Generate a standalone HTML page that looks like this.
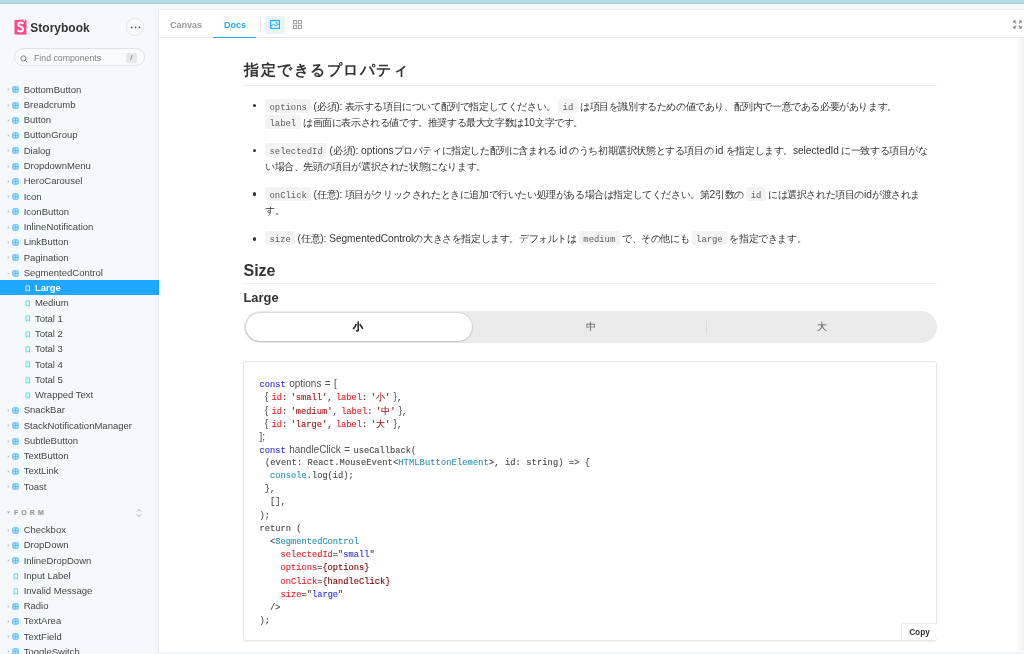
<!DOCTYPE html>
<html><head><meta charset="utf-8">
<style>
*{box-sizing:border-box;margin:0;padding:0}
html,body{width:1024px;height:654px;overflow:hidden;background:#f6f9fc;font-family:"Liberation Sans",sans-serif;color:#333}
.abs{position:absolute}
#topband{position:absolute;left:0;top:0;width:1024px;height:3.5px;background:#b3dde4}
#sidebar{position:absolute;left:0;top:7px;width:1024px;height:647px;background:#f6f9fc}
.ic{position:absolute}
.it{position:absolute;height:15.27px;line-height:15.27px;font-size:9.5px;color:#444;white-space:nowrap}
.b{font-weight:bold}
.sel{position:absolute;left:0;width:159px;height:15.27px;background:#1ea7fd}
#panel{position:absolute;left:159px;top:10.3px;width:865px;height:641.3px;background:#fff;box-shadow:0 0 2px rgba(0,0,0,.10);}
#toolbar{position:absolute;left:0;top:0;width:865px;height:27.7px;border-bottom:1px solid #ebebeb}
.tab{position:absolute;top:0;height:27px;line-height:30px;font-size:9px;font-weight:bold;color:#999}
.docs{position:absolute;font-size:9.66px;letter-spacing:-0.4px;color:#333;white-space:nowrap}
.lat{font-size:10.1px;letter-spacing:0}
h2{position:absolute;font-weight:bold;color:#333;white-space:nowrap}
code{font-family:"Liberation Mono",monospace;font-size:8.9px;letter-spacing:0;background:#f3f3f3;border-radius:3px;padding:4px 4.5px 0;color:#5c5c5c}
.li{position:absolute;left:0;height:16.6px;line-height:16.6px;white-space:nowrap}
.bul{position:absolute;left:252.8px;width:3.4px;height:3.4px;border-radius:50%;background:#333}
.pre{position:absolute;font-family:"Liberation Mono",monospace;font-size:8.73px;color:#4a4a4a;white-space:pre;-webkit-text-stroke:0.12px currentColor}
.cl{position:absolute;left:0;height:13.2px;line-height:13.2px}
.k{color:#0000ff}.p{color:#ff0000}.s{color:#A31515}.cn{color:#2B91AF}.sn{font-family:"Liberation Sans",sans-serif;font-size:10px;word-spacing:0.6px;-webkit-text-stroke:0;color:#505050}
.pre .p{color:#e8202a}.pre .k{color:#2f2ff0}
body{filter:blur(0.4px)}
</style></head><body>
<div id="topband"></div>
<div class="abs" style="left:0;top:2.7px;width:1024px;height:0.9px;background:#a9d0d9"></div>
<div class="abs" style="left:0;top:3.6px;width:1024px;height:3.4px;background:#f8f9fa"></div>
<div id="sidebar"></div>
<div class="abs" style="left:154.6px;top:8px;width:0.8px;height:646px;background:#edf0f3"></div>
<div class="abs" style="left:157.9px;top:8px;width:1px;height:646px;background:#eceef0"></div>
<!-- logo -->
<svg class="abs" style="left:13.5px;top:19px" width="13" height="16" viewBox="0 0 13 16"><path d="M0.5 1.1 L11.6 0.4 Q12.4 0.4 12.4 1.2 V15 Q12.4 15.9 11.6 15.8 L1.2 15.4 Q0.5 15.4 0.5 14.6Z" fill="#ff4785"/><path d="M9.6 0.5 L9.5 2.6 L10.3 2 L11 2.6 L11 0.45Z" fill="#fff"/><path d="M8.9 5.2 Q8.7 3.6 6.5 3.6 Q4.3 3.6 4.3 5.4 Q4.3 6.9 6.5 7.5 Q9 8.2 9 10.3 Q9 12.5 6.4 12.5 Q4.1 12.5 3.9 10.7" fill="none" stroke="#fff" stroke-width="2"/></svg>
<div class="abs b" style="left:30.3px;top:20.1px;font-size:12px;line-height:16px;color:#333">Storybook</div>
<!-- more button -->
<div class="abs" style="left:126px;top:18.3px;width:18px;height:18px;border-radius:50%;border:1px solid #e3e5e8;background:#f8fafc"></div>
<svg class="abs" style="left:126px;top:18px" width="18" height="18" viewBox="0 0 18 18"><circle cx="5.7" cy="9.4" r="0.9" fill="#555"/><circle cx="9.6" cy="9.4" r="0.9" fill="#555"/><circle cx="13.4" cy="9.4" r="0.9" fill="#555"/></svg>
<!-- search -->
<div class="abs" style="left:14px;top:48.3px;width:130.5px;height:18px;border-radius:9px;border:1px solid #dfe2e6;background:#f8fafc"></div>
<svg class="abs" style="left:20px;top:54.5px" width="8" height="8" viewBox="0 0 8 8"><circle cx="3.4" cy="3.4" r="2.6" fill="none" stroke="#777" stroke-width="0.9"/><path d="M5.3 5.3L7.3 7.3" stroke="#777" stroke-width="1"/></svg>
<div class="abs" style="left:34px;top:50.3px;line-height:17px;font-size:8.75px;color:#808080">Find components</div>
<div class="abs" style="left:126px;top:52.7px;width:10.5px;height:10.5px;background:#e4e6e9;border-radius:1.5px;color:#777;font-size:8px;line-height:10.5px;text-align:center">/</div>
<svg class="ic" style="left:5.5px;top:87.3px" width="5" height="5" viewBox="0 0 5 5"><path d="M1.8 1.1V3.9L3.2 2.5Z" fill="#b5b5b5"/></svg>
<svg class="ic" style="left:12.4px;top:86.3px" width="7" height="7" viewBox="0 0 7 7"><rect x="0.7" y="0.7" width="5.6" height="5.6" rx="1" fill="#1ea7fd" fill-opacity="0.35" stroke="#1ea7fd" stroke-width="0.8" stroke-opacity="0.75"/><path d="M3.5 0.9V6.1M0.9 3.5H6.1" stroke="#1ea7fd" stroke-width="0.6" opacity="0.7"/></svg>
<div class="it" style="left:23.7px;top:81.66px">BottomButton</div>
<svg class="ic" style="left:5.5px;top:102.57px" width="5" height="5" viewBox="0 0 5 5"><path d="M1.8 1.1V3.9L3.2 2.5Z" fill="#b5b5b5"/></svg>
<svg class="ic" style="left:12.4px;top:101.57px" width="7" height="7" viewBox="0 0 7 7"><rect x="0.7" y="0.7" width="5.6" height="5.6" rx="1" fill="#1ea7fd" fill-opacity="0.35" stroke="#1ea7fd" stroke-width="0.8" stroke-opacity="0.75"/><path d="M3.5 0.9V6.1M0.9 3.5H6.1" stroke="#1ea7fd" stroke-width="0.6" opacity="0.7"/></svg>
<div class="it" style="left:23.7px;top:96.93px">Breadcrumb</div>
<svg class="ic" style="left:5.5px;top:117.84px" width="5" height="5" viewBox="0 0 5 5"><path d="M1.8 1.1V3.9L3.2 2.5Z" fill="#b5b5b5"/></svg>
<svg class="ic" style="left:12.4px;top:116.84px" width="7" height="7" viewBox="0 0 7 7"><rect x="0.7" y="0.7" width="5.6" height="5.6" rx="1" fill="#1ea7fd" fill-opacity="0.35" stroke="#1ea7fd" stroke-width="0.8" stroke-opacity="0.75"/><path d="M3.5 0.9V6.1M0.9 3.5H6.1" stroke="#1ea7fd" stroke-width="0.6" opacity="0.7"/></svg>
<div class="it" style="left:23.7px;top:112.20px">Button</div>
<svg class="ic" style="left:5.5px;top:133.11px" width="5" height="5" viewBox="0 0 5 5"><path d="M1.8 1.1V3.9L3.2 2.5Z" fill="#b5b5b5"/></svg>
<svg class="ic" style="left:12.4px;top:132.11px" width="7" height="7" viewBox="0 0 7 7"><rect x="0.7" y="0.7" width="5.6" height="5.6" rx="1" fill="#1ea7fd" fill-opacity="0.35" stroke="#1ea7fd" stroke-width="0.8" stroke-opacity="0.75"/><path d="M3.5 0.9V6.1M0.9 3.5H6.1" stroke="#1ea7fd" stroke-width="0.6" opacity="0.7"/></svg>
<div class="it" style="left:23.7px;top:127.48px">ButtonGroup</div>
<svg class="ic" style="left:5.5px;top:148.38px" width="5" height="5" viewBox="0 0 5 5"><path d="M1.8 1.1V3.9L3.2 2.5Z" fill="#b5b5b5"/></svg>
<svg class="ic" style="left:12.4px;top:147.38px" width="7" height="7" viewBox="0 0 7 7"><rect x="0.7" y="0.7" width="5.6" height="5.6" rx="1" fill="#1ea7fd" fill-opacity="0.35" stroke="#1ea7fd" stroke-width="0.8" stroke-opacity="0.75"/><path d="M3.5 0.9V6.1M0.9 3.5H6.1" stroke="#1ea7fd" stroke-width="0.6" opacity="0.7"/></svg>
<div class="it" style="left:23.7px;top:142.75px">Dialog</div>
<svg class="ic" style="left:5.5px;top:163.64999999999998px" width="5" height="5" viewBox="0 0 5 5"><path d="M1.8 1.1V3.9L3.2 2.5Z" fill="#b5b5b5"/></svg>
<svg class="ic" style="left:12.4px;top:162.64999999999998px" width="7" height="7" viewBox="0 0 7 7"><rect x="0.7" y="0.7" width="5.6" height="5.6" rx="1" fill="#1ea7fd" fill-opacity="0.35" stroke="#1ea7fd" stroke-width="0.8" stroke-opacity="0.75"/><path d="M3.5 0.9V6.1M0.9 3.5H6.1" stroke="#1ea7fd" stroke-width="0.6" opacity="0.7"/></svg>
<div class="it" style="left:23.7px;top:158.01px">DropdownMenu</div>
<svg class="ic" style="left:5.5px;top:178.92000000000002px" width="5" height="5" viewBox="0 0 5 5"><path d="M1.8 1.1V3.9L3.2 2.5Z" fill="#b5b5b5"/></svg>
<svg class="ic" style="left:12.4px;top:177.92000000000002px" width="7" height="7" viewBox="0 0 7 7"><rect x="0.7" y="0.7" width="5.6" height="5.6" rx="1" fill="#1ea7fd" fill-opacity="0.35" stroke="#1ea7fd" stroke-width="0.8" stroke-opacity="0.75"/><path d="M3.5 0.9V6.1M0.9 3.5H6.1" stroke="#1ea7fd" stroke-width="0.6" opacity="0.7"/></svg>
<div class="it" style="left:23.7px;top:173.29px">HeroCarousel</div>
<svg class="ic" style="left:5.5px;top:194.19px" width="5" height="5" viewBox="0 0 5 5"><path d="M1.8 1.1V3.9L3.2 2.5Z" fill="#b5b5b5"/></svg>
<svg class="ic" style="left:12.4px;top:193.19px" width="7" height="7" viewBox="0 0 7 7"><rect x="0.7" y="0.7" width="5.6" height="5.6" rx="1" fill="#1ea7fd" fill-opacity="0.35" stroke="#1ea7fd" stroke-width="0.8" stroke-opacity="0.75"/><path d="M3.5 0.9V6.1M0.9 3.5H6.1" stroke="#1ea7fd" stroke-width="0.6" opacity="0.7"/></svg>
<div class="it" style="left:23.7px;top:188.56px">Icon</div>
<svg class="ic" style="left:5.5px;top:209.45999999999998px" width="5" height="5" viewBox="0 0 5 5"><path d="M1.8 1.1V3.9L3.2 2.5Z" fill="#b5b5b5"/></svg>
<svg class="ic" style="left:12.4px;top:208.45999999999998px" width="7" height="7" viewBox="0 0 7 7"><rect x="0.7" y="0.7" width="5.6" height="5.6" rx="1" fill="#1ea7fd" fill-opacity="0.35" stroke="#1ea7fd" stroke-width="0.8" stroke-opacity="0.75"/><path d="M3.5 0.9V6.1M0.9 3.5H6.1" stroke="#1ea7fd" stroke-width="0.6" opacity="0.7"/></svg>
<div class="it" style="left:23.7px;top:203.82px">IconButton</div>
<svg class="ic" style="left:5.5px;top:224.73000000000002px" width="5" height="5" viewBox="0 0 5 5"><path d="M1.8 1.1V3.9L3.2 2.5Z" fill="#b5b5b5"/></svg>
<svg class="ic" style="left:12.4px;top:223.73000000000002px" width="7" height="7" viewBox="0 0 7 7"><rect x="0.7" y="0.7" width="5.6" height="5.6" rx="1" fill="#1ea7fd" fill-opacity="0.35" stroke="#1ea7fd" stroke-width="0.8" stroke-opacity="0.75"/><path d="M3.5 0.9V6.1M0.9 3.5H6.1" stroke="#1ea7fd" stroke-width="0.6" opacity="0.7"/></svg>
<div class="it" style="left:23.7px;top:219.10px">InlineNotification</div>
<svg class="ic" style="left:5.5px;top:240.0px" width="5" height="5" viewBox="0 0 5 5"><path d="M1.8 1.1V3.9L3.2 2.5Z" fill="#b5b5b5"/></svg>
<svg class="ic" style="left:12.4px;top:239.0px" width="7" height="7" viewBox="0 0 7 7"><rect x="0.7" y="0.7" width="5.6" height="5.6" rx="1" fill="#1ea7fd" fill-opacity="0.35" stroke="#1ea7fd" stroke-width="0.8" stroke-opacity="0.75"/><path d="M3.5 0.9V6.1M0.9 3.5H6.1" stroke="#1ea7fd" stroke-width="0.6" opacity="0.7"/></svg>
<div class="it" style="left:23.7px;top:234.37px">LinkButton</div>
<svg class="ic" style="left:5.5px;top:255.26999999999998px" width="5" height="5" viewBox="0 0 5 5"><path d="M1.8 1.1V3.9L3.2 2.5Z" fill="#b5b5b5"/></svg>
<svg class="ic" style="left:12.4px;top:254.26999999999998px" width="7" height="7" viewBox="0 0 7 7"><rect x="0.7" y="0.7" width="5.6" height="5.6" rx="1" fill="#1ea7fd" fill-opacity="0.35" stroke="#1ea7fd" stroke-width="0.8" stroke-opacity="0.75"/><path d="M3.5 0.9V6.1M0.9 3.5H6.1" stroke="#1ea7fd" stroke-width="0.6" opacity="0.7"/></svg>
<div class="it" style="left:23.7px;top:249.63px">Pagination</div>
<svg class="ic" style="left:5.5px;top:270.54px" width="5" height="5" viewBox="0 0 5 5"><path d="M1.1 1.9H3.9L2.5 3.3Z" fill="#b5b5b5"/></svg>
<svg class="ic" style="left:12.4px;top:269.54px" width="7" height="7" viewBox="0 0 7 7"><rect x="0.7" y="0.7" width="5.6" height="5.6" rx="1" fill="#1ea7fd" fill-opacity="0.35" stroke="#1ea7fd" stroke-width="0.8" stroke-opacity="0.75"/><path d="M3.5 0.9V6.1M0.9 3.5H6.1" stroke="#1ea7fd" stroke-width="0.6" opacity="0.7"/></svg>
<div class="it" style="left:23.7px;top:264.91px">SegmentedControl</div>
<div class="sel" style="top:280.18px"></div>
<svg class="ic" style="left:24.6px;top:284.91px" width="6" height="7" viewBox="0 0 6 7"><path d="M1 0.9H4.6V6.2L2.8 4.9L1 6.2Z" fill="none" stroke="#fff" stroke-width="0.85" stroke-linejoin="round" opacity="0.9"/></svg>
<div class="it b" style="left:34.9px;top:280.18px;color:#fff">Large</div>
<svg class="ic" style="left:24.6px;top:300.18px" width="6" height="7" viewBox="0 0 6 7"><path d="M1 0.9H4.6V6.2L2.8 4.9L1 6.2Z" fill="none" stroke="#37d5d3" stroke-width="0.85" stroke-linejoin="round" opacity="0.9"/></svg>
<div class="it" style="left:34.9px;top:295.44px">Medium</div>
<svg class="ic" style="left:24.6px;top:315.45px" width="6" height="7" viewBox="0 0 6 7"><path d="M1 0.9H4.6V6.2L2.8 4.9L1 6.2Z" fill="none" stroke="#37d5d3" stroke-width="0.85" stroke-linejoin="round" opacity="0.9"/></svg>
<div class="it" style="left:34.9px;top:310.71px">Total 1</div>
<svg class="ic" style="left:24.6px;top:330.72px" width="6" height="7" viewBox="0 0 6 7"><path d="M1 0.9H4.6V6.2L2.8 4.9L1 6.2Z" fill="none" stroke="#37d5d3" stroke-width="0.85" stroke-linejoin="round" opacity="0.9"/></svg>
<div class="it" style="left:34.9px;top:325.99px">Total 2</div>
<svg class="ic" style="left:24.6px;top:345.99px" width="6" height="7" viewBox="0 0 6 7"><path d="M1 0.9H4.6V6.2L2.8 4.9L1 6.2Z" fill="none" stroke="#37d5d3" stroke-width="0.85" stroke-linejoin="round" opacity="0.9"/></svg>
<div class="it" style="left:34.9px;top:341.25px">Total 3</div>
<svg class="ic" style="left:24.6px;top:361.26000000000005px" width="6" height="7" viewBox="0 0 6 7"><path d="M1 0.9H4.6V6.2L2.8 4.9L1 6.2Z" fill="none" stroke="#37d5d3" stroke-width="0.85" stroke-linejoin="round" opacity="0.9"/></svg>
<div class="it" style="left:34.9px;top:356.53px">Total 4</div>
<svg class="ic" style="left:24.6px;top:376.53000000000003px" width="6" height="7" viewBox="0 0 6 7"><path d="M1 0.9H4.6V6.2L2.8 4.9L1 6.2Z" fill="none" stroke="#37d5d3" stroke-width="0.85" stroke-linejoin="round" opacity="0.9"/></svg>
<div class="it" style="left:34.9px;top:371.80px">Total 5</div>
<svg class="ic" style="left:24.6px;top:391.8px" width="6" height="7" viewBox="0 0 6 7"><path d="M1 0.9H4.6V6.2L2.8 4.9L1 6.2Z" fill="none" stroke="#37d5d3" stroke-width="0.85" stroke-linejoin="round" opacity="0.9"/></svg>
<div class="it" style="left:34.9px;top:387.06px">Wrapped Text</div>
<svg class="ic" style="left:5.5px;top:407.97px" width="5" height="5" viewBox="0 0 5 5"><path d="M1.8 1.1V3.9L3.2 2.5Z" fill="#b5b5b5"/></svg>
<svg class="ic" style="left:12.4px;top:406.97px" width="7" height="7" viewBox="0 0 7 7"><rect x="0.7" y="0.7" width="5.6" height="5.6" rx="1" fill="#1ea7fd" fill-opacity="0.35" stroke="#1ea7fd" stroke-width="0.8" stroke-opacity="0.75"/><path d="M3.5 0.9V6.1M0.9 3.5H6.1" stroke="#1ea7fd" stroke-width="0.6" opacity="0.7"/></svg>
<div class="it" style="left:23.7px;top:402.34px">SnackBar</div>
<svg class="ic" style="left:5.5px;top:423.24px" width="5" height="5" viewBox="0 0 5 5"><path d="M1.8 1.1V3.9L3.2 2.5Z" fill="#b5b5b5"/></svg>
<svg class="ic" style="left:12.4px;top:422.24px" width="7" height="7" viewBox="0 0 7 7"><rect x="0.7" y="0.7" width="5.6" height="5.6" rx="1" fill="#1ea7fd" fill-opacity="0.35" stroke="#1ea7fd" stroke-width="0.8" stroke-opacity="0.75"/><path d="M3.5 0.9V6.1M0.9 3.5H6.1" stroke="#1ea7fd" stroke-width="0.6" opacity="0.7"/></svg>
<div class="it" style="left:23.7px;top:417.61px">StackNotificationManager</div>
<svg class="ic" style="left:5.5px;top:438.51px" width="5" height="5" viewBox="0 0 5 5"><path d="M1.8 1.1V3.9L3.2 2.5Z" fill="#b5b5b5"/></svg>
<svg class="ic" style="left:12.4px;top:437.51px" width="7" height="7" viewBox="0 0 7 7"><rect x="0.7" y="0.7" width="5.6" height="5.6" rx="1" fill="#1ea7fd" fill-opacity="0.35" stroke="#1ea7fd" stroke-width="0.8" stroke-opacity="0.75"/><path d="M3.5 0.9V6.1M0.9 3.5H6.1" stroke="#1ea7fd" stroke-width="0.6" opacity="0.7"/></svg>
<div class="it" style="left:23.7px;top:432.88px">SubtleButton</div>
<svg class="ic" style="left:5.5px;top:453.78000000000003px" width="5" height="5" viewBox="0 0 5 5"><path d="M1.8 1.1V3.9L3.2 2.5Z" fill="#b5b5b5"/></svg>
<svg class="ic" style="left:12.4px;top:452.78000000000003px" width="7" height="7" viewBox="0 0 7 7"><rect x="0.7" y="0.7" width="5.6" height="5.6" rx="1" fill="#1ea7fd" fill-opacity="0.35" stroke="#1ea7fd" stroke-width="0.8" stroke-opacity="0.75"/><path d="M3.5 0.9V6.1M0.9 3.5H6.1" stroke="#1ea7fd" stroke-width="0.6" opacity="0.7"/></svg>
<div class="it" style="left:23.7px;top:448.15px">TextButton</div>
<svg class="ic" style="left:5.5px;top:469.05px" width="5" height="5" viewBox="0 0 5 5"><path d="M1.8 1.1V3.9L3.2 2.5Z" fill="#b5b5b5"/></svg>
<svg class="ic" style="left:12.4px;top:468.05px" width="7" height="7" viewBox="0 0 7 7"><rect x="0.7" y="0.7" width="5.6" height="5.6" rx="1" fill="#1ea7fd" fill-opacity="0.35" stroke="#1ea7fd" stroke-width="0.8" stroke-opacity="0.75"/><path d="M3.5 0.9V6.1M0.9 3.5H6.1" stroke="#1ea7fd" stroke-width="0.6" opacity="0.7"/></svg>
<div class="it" style="left:23.7px;top:463.42px">TextLink</div>
<svg class="ic" style="left:5.5px;top:484.32px" width="5" height="5" viewBox="0 0 5 5"><path d="M1.8 1.1V3.9L3.2 2.5Z" fill="#b5b5b5"/></svg>
<svg class="ic" style="left:12.4px;top:483.32px" width="7" height="7" viewBox="0 0 7 7"><rect x="0.7" y="0.7" width="5.6" height="5.6" rx="1" fill="#1ea7fd" fill-opacity="0.35" stroke="#1ea7fd" stroke-width="0.8" stroke-opacity="0.75"/><path d="M3.5 0.9V6.1M0.9 3.5H6.1" stroke="#1ea7fd" stroke-width="0.6" opacity="0.7"/></svg>
<div class="it" style="left:23.7px;top:478.69px">Toast</div>
<svg class="ic" style="left:5.5px;top:527.8px" width="5" height="5" viewBox="0 0 5 5"><path d="M1.8 1.1V3.9L3.2 2.5Z" fill="#b5b5b5"/></svg>
<svg class="ic" style="left:12.4px;top:526.8px" width="7" height="7" viewBox="0 0 7 7"><rect x="0.7" y="0.7" width="5.6" height="5.6" rx="1" fill="#1ea7fd" fill-opacity="0.35" stroke="#1ea7fd" stroke-width="0.8" stroke-opacity="0.75"/><path d="M3.5 0.9V6.1M0.9 3.5H6.1" stroke="#1ea7fd" stroke-width="0.6" opacity="0.7"/></svg>
<div class="it" style="left:23.7px;top:522.16px">Checkbox</div>
<svg class="ic" style="left:5.5px;top:543.0px" width="5" height="5" viewBox="0 0 5 5"><path d="M1.8 1.1V3.9L3.2 2.5Z" fill="#b5b5b5"/></svg>
<svg class="ic" style="left:12.4px;top:542.0px" width="7" height="7" viewBox="0 0 7 7"><rect x="0.7" y="0.7" width="5.6" height="5.6" rx="1" fill="#1ea7fd" fill-opacity="0.35" stroke="#1ea7fd" stroke-width="0.8" stroke-opacity="0.75"/><path d="M3.5 0.9V6.1M0.9 3.5H6.1" stroke="#1ea7fd" stroke-width="0.6" opacity="0.7"/></svg>
<div class="it" style="left:23.7px;top:537.37px">DropDown</div>
<svg class="ic" style="left:5.5px;top:558.1999999999999px" width="5" height="5" viewBox="0 0 5 5"><path d="M1.8 1.1V3.9L3.2 2.5Z" fill="#b5b5b5"/></svg>
<svg class="ic" style="left:12.4px;top:557.1999999999999px" width="7" height="7" viewBox="0 0 7 7"><rect x="0.7" y="0.7" width="5.6" height="5.6" rx="1" fill="#1ea7fd" fill-opacity="0.35" stroke="#1ea7fd" stroke-width="0.8" stroke-opacity="0.75"/><path d="M3.5 0.9V6.1M0.9 3.5H6.1" stroke="#1ea7fd" stroke-width="0.6" opacity="0.7"/></svg>
<div class="it" style="left:23.7px;top:552.56px">InlineDropDown</div>
<svg class="ic" style="left:12.8px;top:572.5px" width="6" height="7" viewBox="0 0 6 7"><path d="M1 0.9H4.6V6.2L2.8 4.9L1 6.2Z" fill="none" stroke="#37d5d3" stroke-width="0.85" stroke-linejoin="round" opacity="0.9"/></svg>
<div class="it" style="left:23.7px;top:567.76px">Input Label</div>
<svg class="ic" style="left:12.8px;top:587.6999999999999px" width="6" height="7" viewBox="0 0 6 7"><path d="M1 0.9H4.6V6.2L2.8 4.9L1 6.2Z" fill="none" stroke="#37d5d3" stroke-width="0.85" stroke-linejoin="round" opacity="0.9"/></svg>
<div class="it" style="left:23.7px;top:582.96px">Invalid Message</div>
<svg class="ic" style="left:5.5px;top:603.8px" width="5" height="5" viewBox="0 0 5 5"><path d="M1.8 1.1V3.9L3.2 2.5Z" fill="#b5b5b5"/></svg>
<svg class="ic" style="left:12.4px;top:602.8px" width="7" height="7" viewBox="0 0 7 7"><rect x="0.7" y="0.7" width="5.6" height="5.6" rx="1" fill="#1ea7fd" fill-opacity="0.35" stroke="#1ea7fd" stroke-width="0.8" stroke-opacity="0.75"/><path d="M3.5 0.9V6.1M0.9 3.5H6.1" stroke="#1ea7fd" stroke-width="0.6" opacity="0.7"/></svg>
<div class="it" style="left:23.7px;top:598.16px">Radio</div>
<svg class="ic" style="left:5.5px;top:619.0px" width="5" height="5" viewBox="0 0 5 5"><path d="M1.8 1.1V3.9L3.2 2.5Z" fill="#b5b5b5"/></svg>
<svg class="ic" style="left:12.4px;top:618.0px" width="7" height="7" viewBox="0 0 7 7"><rect x="0.7" y="0.7" width="5.6" height="5.6" rx="1" fill="#1ea7fd" fill-opacity="0.35" stroke="#1ea7fd" stroke-width="0.8" stroke-opacity="0.75"/><path d="M3.5 0.9V6.1M0.9 3.5H6.1" stroke="#1ea7fd" stroke-width="0.6" opacity="0.7"/></svg>
<div class="it" style="left:23.7px;top:613.37px">TextArea</div>
<svg class="ic" style="left:5.5px;top:634.1999999999999px" width="5" height="5" viewBox="0 0 5 5"><path d="M1.8 1.1V3.9L3.2 2.5Z" fill="#b5b5b5"/></svg>
<svg class="ic" style="left:12.4px;top:633.1999999999999px" width="7" height="7" viewBox="0 0 7 7"><rect x="0.7" y="0.7" width="5.6" height="5.6" rx="1" fill="#1ea7fd" fill-opacity="0.35" stroke="#1ea7fd" stroke-width="0.8" stroke-opacity="0.75"/><path d="M3.5 0.9V6.1M0.9 3.5H6.1" stroke="#1ea7fd" stroke-width="0.6" opacity="0.7"/></svg>
<div class="it" style="left:23.7px;top:628.56px">TextField</div>
<svg class="ic" style="left:5.5px;top:649.4px" width="5" height="5" viewBox="0 0 5 5"><path d="M1.8 1.1V3.9L3.2 2.5Z" fill="#b5b5b5"/></svg>
<svg class="ic" style="left:12.4px;top:648.4px" width="7" height="7" viewBox="0 0 7 7"><rect x="0.7" y="0.7" width="5.6" height="5.6" rx="1" fill="#1ea7fd" fill-opacity="0.35" stroke="#1ea7fd" stroke-width="0.8" stroke-opacity="0.75"/><path d="M3.5 0.9V6.1M0.9 3.5H6.1" stroke="#1ea7fd" stroke-width="0.6" opacity="0.7"/></svg>
<div class="it" style="left:23.7px;top:643.76px">ToggleSwitch</div>
<!-- FORM header -->
<svg class="ic" style="left:5.5px;top:510.3px" width="5" height="5" viewBox="0 0 5 5"><path d="M0.8 1.5H4.2L2.5 3.6Z" fill="#aaa"/></svg>
<div class="abs b" style="left:14px;top:508px;font-size:7px;line-height:10px;letter-spacing:3.05px;color:#999;-webkit-text-stroke:0.2px #999">FORM</div>
<svg class="abs" style="left:135.5px;top:508px" width="6" height="10" viewBox="0 0 6 10"><path d="M1 3.5L3 1.5L5 3.5M1 6.5L3 8.5L5 6.5" fill="none" stroke="#999" stroke-width="0.9"/></svg>

<div id="panel">
 <div id="toolbar"></div>
 <div class="tab" style="left:11px">Canvas</div>
 <div class="tab" style="left:65px;color:#1ea7fd">Docs</div>
 <div class="abs" style="left:53.9px;top:26.4px;width:43.4px;height:1.8px;background:#1ea7fd;border-radius:1px"></div>
 <div class="abs" style="left:101px;top:8px;width:1px;height:13.7px;background:#e6e6e6"></div>
 <div class="abs" style="left:106px;top:5.3px;width:20px;height:18px;border-radius:3px;background:#e8f4fe"></div>
 <svg class="abs" style="left:111px;top:10px" width="10" height="9" viewBox="0 0 10 9"><rect x="0.6" y="0.6" width="8.8" height="7.8" fill="none" stroke="#1ea7fd" stroke-width="1.1"/><path d="M0.6 6.5L3.5 4L6 6.2L9.4 3.5" fill="none" stroke="#1ea7fd" stroke-width="1"/><circle cx="6.5" cy="2.8" r="0.9" fill="#1ea7fd"/></svg>
 <svg class="abs" style="left:134px;top:10px" width="9" height="9" viewBox="0 0 9 9"><rect x="0.5" y="0.5" width="3.2" height="3.2" fill="none" stroke="#999" stroke-width="0.9"/><rect x="5.3" y="0.5" width="3.2" height="3.2" fill="none" stroke="#999" stroke-width="0.9"/><rect x="0.5" y="5.3" width="3.2" height="3.2" fill="none" stroke="#999" stroke-width="0.9"/><rect x="5.3" y="5.3" width="3.2" height="3.2" fill="none" stroke="#999" stroke-width="0.9"/></svg>
 <svg class="abs" style="left:853.6px;top:10px" width="9" height="9" viewBox="0 0 9 9"><path d="M0.7 0.7L3.3 3.3M0.7 0.7H2.8M0.7 0.7V2.8M8.3 0.7L5.7 3.3M8.3 0.7H6.2M8.3 0.7V2.8M0.7 8.3L3.3 5.7M0.7 8.3H2.8M0.7 8.3V6.2M8.3 8.3L5.7 5.7M8.3 8.3H6.2M8.3 8.3V6.2" fill="none" stroke="#888" stroke-width="1.1"/></svg>
 <div class="abs" style="left:858px;top:28px;width:7px;height:613px;background:linear-gradient(90deg,#fcfcfc,#f2f2f2)"></div>
</div>

<!-- docs content (page coordinates) -->
<h2 style="left:244px;top:57.5px;font-size:15.2px;line-height:24px;letter-spacing:1.56px">指定できるプロパティ</h2>
<div class="abs" style="left:243.4px;top:85px;width:693.6px;height:1px;background:#ececec"></div>

<div class="bul" style="top:103.50px"></div>
<div class="docs li" style="left:265px;top:98.60px"><code>options</code> <span class="lat">(</span>必須<span class="lat">):</span> 表示する項目について配列で指定してください。 <code>id</code> は項目を識別するための値であり、配列内で一意である必要があります。</div>
<div class="docs li" style="left:265px;top:114.90px"><code>label</code> は画面に表示される値です。推奨する最大文字数は<span class="lat">10</span>文字です。</div>
<div class="bul" style="top:148.50px"></div>
<div class="docs li" style="left:265px;top:142.90px"><code>selectedId</code> <span class="lat">(</span>必須<span class="lat">): options</span>プロパティに指定した配列に含まれる <span class="lat">id</span> のうち初期選択状態とする項目の <span class="lat">id</span> を指定します。<span class="lat">selectedId</span> に一致する項目がな</div>
<div class="docs li" style="left:265px;top:159.00px">い場合、先頭の項目が選択された状態になります。</div>
<div class="bul" style="top:192.40px"></div>
<div class="docs li" style="left:265px;top:186.60px"><code>onClick</code> <span class="lat">(</span>任意<span class="lat">):</span> 項目がクリックされたときに追加で行いたい処理がある場合は指定してください。第<span class="lat">2</span>引数の <code>id</code> には選択された項目の<span class="lat">id</span>が渡されま</div>
<div class="docs li" style="left:265px;top:203.20px">す。</div>
<div class="bul" style="top:237.20px"></div>
<div class="docs li" style="left:265px;top:231.00px"><code>size</code> <span class="lat">(</span>任意<span class="lat">): SegmentedControl</span>の大きさを指定します。デフォルトは <code>medium</code> で、その他にも <code>large</code> を指定できます。</div>

<h2 style="left:243.5px;top:260.3px;font-size:16px;line-height:22px">Size</h2>
<div class="abs" style="left:243.4px;top:283px;width:693.6px;height:1px;background:#ececec"></div>
<h2 style="left:243.5px;top:290.3px;font-size:12.9px;line-height:16px">Large</h2>

<!-- segmented -->
<div class="abs" style="left:243.5px;top:310.7px;width:693.5px;height:32.3px;border-radius:16.2px;background:#ebebeb"></div>
<div class="abs" style="left:245.5px;top:313px;width:226.5px;height:28px;border-radius:14px;background:#fff;box-shadow:0 0 0 0.6px rgba(0,0,0,.08),0 0.5px 2px rgba(0,0,0,.22)"></div>
<div class="abs" style="left:706px;top:319px;width:1px;height:15px;background:#dcdcdc"></div>
<div class="abs b" style="left:343px;top:319px;width:30px;text-align:center;font-size:9.6px;line-height:15px;color:#333;-webkit-text-stroke:0.35px #333">小</div>
<div class="abs" style="left:575.5px;top:319px;width:30px;text-align:center;font-size:9.6px;line-height:15px;color:#555">中</div>
<div class="abs" style="left:806.5px;top:319px;width:30px;text-align:center;font-size:9.6px;line-height:15px;color:#555">大</div>

<!-- code block -->
<div class="abs" style="left:243.4px;top:361.3px;width:693.6px;height:279.5px;border:1px solid #e6e6e6;border-radius:3px;background:#fff;box-shadow:0 1px 2px rgba(0,0,0,.06)"></div>
<div class="pre cl" style="left:259.6px;top:377.20px;"><span class="k">const</span><span class="sn"> options = [</span></div>
<div class="pre cl" style="left:259.6px;top:390.43px;"> <span class="sn">{ </span><span class="p">id</span>:<span class="sn"> </span><span class="s">'small'</span>,<span class="sn"> </span><span class="p">label</span>:<span class="sn"> </span><span class="s">'小'</span><span class="sn"> }</span>,</div>
<div class="pre cl" style="left:259.6px;top:403.66px;"> <span class="sn">{ </span><span class="p">id</span>:<span class="sn"> </span><span class="s">'medium'</span>,<span class="sn"> </span><span class="p">label</span>:<span class="sn"> </span><span class="s">'中'</span><span class="sn"> }</span>,</div>
<div class="pre cl" style="left:259.6px;top:416.89px;"> <span class="sn">{ </span><span class="p">id</span>:<span class="sn"> </span><span class="s">'large'</span>,<span class="sn"> </span><span class="p">label</span>:<span class="sn"> </span><span class="s">'大'</span><span class="sn"> }</span>,</div>
<div class="pre cl" style="left:259.6px;top:430.12px;"><span class="sn">];</span></div>
<div class="pre cl" style="left:259.6px;top:443.35px;"><span class="k">const</span><span class="sn"> handleClick = </span>useCallback(</div>
<div class="pre cl" style="left:259.6px;top:456.58px;letter-spacing:0.1px;"> (event: React.MouseEvent&lt;<span class="cn">HTMLButtonElement</span>&gt;, id: string) =&gt; {</div>
<div class="pre cl" style="left:259.6px;top:469.81px;">  <span class="cn">console</span>.log(id);</div>
<div class="pre cl" style="left:259.6px;top:483.04px;"> },</div>
<div class="pre cl" style="left:259.6px;top:496.27px;">  [],</div>
<div class="pre cl" style="left:259.6px;top:509.50px;">);</div>
<div class="pre cl" style="left:259.6px;top:522.73px;">return (</div>
<div class="pre cl" style="left:259.6px;top:535.96px;">  &lt;<span class="cn">SegmentedControl</span></div>
<div class="pre cl" style="left:259.6px;top:549.19px;">    <span class="p">selectedId</span>="<span class="k">small</span>"</div>
<div class="pre cl" style="left:259.6px;top:562.42px;">    <span class="p">options</span>=<span style="color:#800000">{options}</span></div>
<div class="pre cl" style="left:259.6px;top:575.65px;">    <span class="p">onClick</span>=<span style="color:#800000">{handleClick}</span></div>
<div class="pre cl" style="left:259.6px;top:588.88px;">    <span class="p">size</span>="<span class="k">large</span>"</div>
<div class="pre cl" style="left:259.6px;top:602.11px;">  /&gt;</div>
<div class="pre cl" style="left:259.6px;top:615.34px;">);</div>
<div class="abs b" style="left:901px;top:622.7px;width:36px;height:17.5px;border-top:1px solid #eee;border-left:1px solid #eee;border-radius:3px 0 3px 0;background:#fff;font-size:8.3px;line-height:17px;text-align:center;color:#333">Copy</div>

</body></html>
